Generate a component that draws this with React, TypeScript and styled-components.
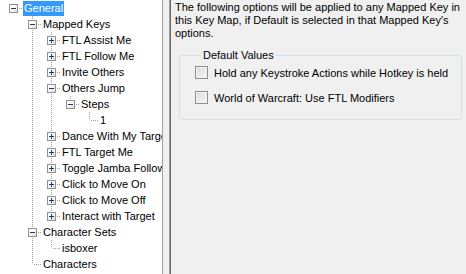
import React from "react";
import styled, { createGlobalStyle } from "styled-components";

const GlobalStyle = createGlobalStyle`
  html, body {
    margin: 0;
    padding: 0;
    background: #f0f0f0;
  }
  body {
    font-family: "Liberation Sans", Arial, sans-serif;
    font-size: 11px;
    color: #000;
  }
`;

type TreeNode = {
  label: string;
  expanded?: boolean;
  selected?: boolean;
  children?: TreeNode[];
};

const tree: TreeNode[] = [
  {
    label: "General",
    expanded: true,
    selected: true,
    children: [
      {
        label: "Mapped Keys",
        expanded: true,
        children: [
          { label: "FTL Assist Me", children: [] },
          { label: "FTL Follow Me", children: [] },
          { label: "Invite Others", children: [] },
          {
            label: "Others Jump",
            expanded: true,
            children: [
              { label: "Steps", expanded: true, children: [{ label: "1" }] },
            ],
          },
          { label: "Dance With My Target", children: [] },
          { label: "FTL Target Me", children: [] },
          { label: "Toggle Jamba Follow", children: [] },
          { label: "Click to Move On", children: [] },
          { label: "Click to Move Off", children: [] },
          { label: "Interact with Target", children: [] },
        ],
      },
      {
        label: "Character Sets",
        expanded: true,
        children: [{ label: "isboxer" }],
      },
      { label: "Characters" },
    ],
  },
];

const LINE = "#a0a0a0";

const Window = styled.div`
  display: flex;
  width: 466px;
  height: 274px;
  overflow: hidden;
  background: #f0f0f0;
`;

const TreePane = styled.div`
  width: 163px;
  flex: none;
  background: #fff;
  border-right: 1px solid #a0a0a0;
  overflow: hidden;
  padding-left: 4px;
  box-sizing: border-box;
`;

const Row = styled.div`
  display: flex;
  height: 16px;
  align-items: stretch;
  white-space: nowrap;
`;

const Guide = styled.div<{ $line: boolean }>`
  width: 19px;
  flex: none;
  position: relative;
  &::before {
    content: "";
    display: ${(p) => (p.$line ? "block" : "none")};
    position: absolute;
    left: 9px;
    top: 0;
    bottom: 0;
    width: 1px;
    background: repeating-linear-gradient(
      to bottom,
      ${LINE} 0 1px,
      transparent 1px 2px
    );
  }
`;

const Connector = styled.div<{ $up: boolean; $down: boolean }>`
  width: 19px;
  flex: none;
  position: relative;
  &::before {
    content: "";
    position: absolute;
    left: 9px;
    width: 1px;
    top: ${(p) => (p.$up ? "0" : "8px")};
    bottom: ${(p) => (p.$down ? "0" : "8px")};
    background: repeating-linear-gradient(
      to bottom,
      ${LINE} 0 1px,
      transparent 1px 2px
    );
  }
  &::after {
    content: "";
    position: absolute;
    left: 10px;
    right: 0;
    top: 8px;
    height: 1px;
    background: repeating-linear-gradient(
      to right,
      transparent 0 1px,
      ${LINE} 1px 2px
    );
  }
`;

const Expander = styled.span<{ $open: boolean }>`
  position: absolute;
  left: 5px;
  top: 4px;
  width: 7px;
  height: 7px;
  border: 1px solid #919191;
  background: linear-gradient(to bottom right, #fff 30%, #dcdcdc);
  z-index: 1;
  &::before {
    content: "";
    position: absolute;
    left: 1px;
    top: 3px;
    width: 5px;
    height: 1px;
    background: #1f3a6f;
  }
  &::after {
    content: "";
    display: ${(p) => (p.$open ? "none" : "block")};
    position: absolute;
    left: 3px;
    top: 1px;
    width: 1px;
    height: 5px;
    background: #1f3a6f;
  }
`;

const Label = styled.span<{ $selected?: boolean }>`
  align-self: center;
  height: 15px;
  line-height: 15px;
  padding: 0 1px;
  background: ${(p) => (p.$selected ? "#3399ff" : "transparent")};
  color: ${(p) => (p.$selected ? "#fff" : "#000")};
`;

function renderNodes(
  nodes: TreeNode[],
  guides: boolean[],
  isRoot: boolean
): React.ReactNode[] {
  const out: React.ReactNode[] = [];
  nodes.forEach((node, i) => {
    const last = i === nodes.length - 1;
    const up = !(isRoot && i === 0);
    const hasKids = node.children !== undefined;
    out.push(
      <Row key={guides.length + node.label + i}>
        {guides.map((g, gi) => (
          <Guide key={gi} $line={g} />
        ))}
        <Connector $up={up} $down={!last}>
          {hasKids && <Expander $open={!!node.expanded} />}
        </Connector>
        <Label $selected={node.selected}>{node.label}</Label>
      </Row>
    );
    if (node.expanded && node.children) {
      out.push(...renderNodes(node.children, [...guides, !last], false));
    }
  });
  return out;
}

const Splitter = styled.div`
  width: 6px;
  flex: none;
`;

const ContentPane = styled.div`
  flex: 1;
  border-left: 1px solid #a0a0a0;
  box-shadow: inset 1px 0 0 #696969;
  padding: 1px 4px 0 5px;
  box-sizing: border-box;
`;

const Intro = styled.p`
  margin: 0;
  line-height: 13px;
`;

const GroupBox = styled.fieldset`
  margin: 9px 0 0 4px;
  width: 283px;
  height: 71px;
  box-sizing: border-box;
  border: 1px solid #d5dfe5;
  border-radius: 3px;
  padding: 4px 0 0 15px;
  display: flex;
  flex-direction: column;
  gap: 12px;
`;

const Legend = styled.legend`
  padding: 0 2px;
  margin-left: 6px;
  line-height: 13px;
`;

const CheckRow = styled.label`
  display: flex;
  align-items: center;
  gap: 6px;
  height: 13px;
`;

const CheckBox = styled.span`
  width: 11px;
  height: 11px;
  border: 1px solid #8e8f8f;
  background: linear-gradient(to bottom right, #dcdcdc, #f6f6f6);
  box-shadow: inset 0 0 0 1px #f4f4f4;
  flex: none;
`;

export default function App() {
  return (
    <Window>
      <GlobalStyle />
      <TreePane>{renderNodes(tree, [], true)}</TreePane>
      <Splitter />
      <ContentPane>
        <Intro>
          The following options will be applied to any Mapped Key in
          <br />
          this Key Map, if Default is selected in that Mapped Key's
          <br />
          options.
        </Intro>
        <GroupBox>
          <Legend>Default Values</Legend>
          <CheckRow>
            <CheckBox />
            Hold any Keystroke Actions while Hotkey is held
          </CheckRow>
          <CheckRow>
            <CheckBox />
            World of Warcraft: Use FTL Modifiers
          </CheckRow>
        </GroupBox>
      </ContentPane>
    </Window>
  );
}
